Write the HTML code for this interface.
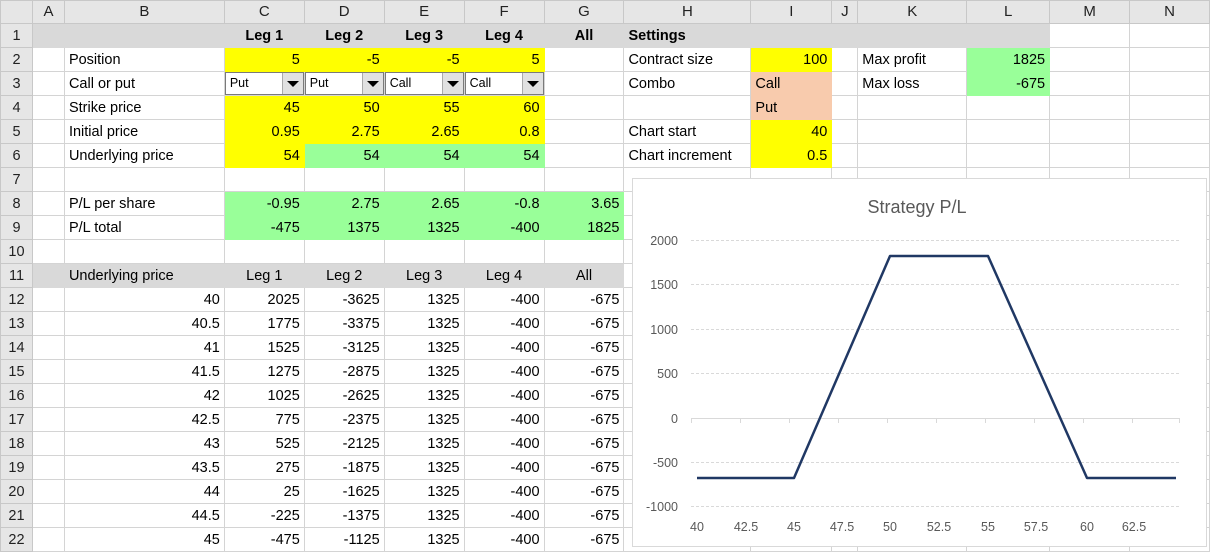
<!DOCTYPE html>
<html><head><meta charset="utf-8">
<style>
body{margin:0;width:1210px;height:551px;overflow:hidden;background:#fff;font-family:"Liberation Sans",sans-serif;font-size:14.5px;color:#000;position:relative}
table{border-collapse:collapse;table-layout:fixed;position:absolute;left:0;top:0}
td{border:1px solid #d4d4d4;height:23px;padding:0 4px;white-space:nowrap;overflow:hidden;line-height:22px}
tr.h td{background:#e6e6e6;text-align:center;font-size:15px;color:#222;border-color:#c8c8c8;height:22px}
td.rh{background:#e6e6e6;text-align:center;color:#222;border-color:#c8c8c8;padding:0}
.r{text-align:right}.c{text-align:center}.b{font-weight:bold}
.g{background:#d9d9d9;border-color:#d9d9d9}
.y{background:#ffff00;border-color:#ffff00}
.gr{background:#99ff99;border-color:#99ff99}
.o{background:#f8cbad;border-color:#f8cbad}
td.dd{padding:0;position:relative}
.box{position:absolute;left:0;top:0;right:0;bottom:0;border:1px solid #7a7a7a;background:#fff;font-size:12.5px;padding-left:4px;line-height:21px}
.btn{position:absolute;right:0;top:0;width:20px;height:21px;background:#e1e1e1;border-left:1px solid #aaa}
.btn:after{content:"";position:absolute;left:4px;top:8px;border-left:6px solid transparent;border-right:6px solid transparent;border-top:6px solid #000}
</style></head><body>
<table>
<colgroup><col style="width:32px"><col style="width:32px"><col style="width:160px"><col style="width:80px"><col style="width:80px"><col style="width:80px"><col style="width:80px"><col style="width:80px"><col style="width:127px"><col style="width:81px"><col style="width:26px"><col style="width:109px"><col style="width:83px"><col style="width:80px"><col style="width:80px"></colgroup>
<tr class="h"><td></td><td>A</td><td>B</td><td>C</td><td>D</td><td>E</td><td>F</td><td>G</td><td>H</td><td>I</td><td>J</td><td>K</td><td>L</td><td>M</td><td>N</td></tr>
<tr><td class="rh">1</td><td class="g"></td><td class="g"></td><td class="g c b">Leg 1</td><td class="g c b">Leg 2</td><td class="g c b">Leg 3</td><td class="g c b">Leg 4</td><td class="g c b">All</td><td class="g b">Settings</td><td class="g"></td><td class="g"></td><td class="g"></td><td class="g"></td><td></td><td></td></tr>
<tr><td class="rh">2</td><td></td><td>Position</td><td class="y r">5</td><td class="y r">-5</td><td class="y r">-5</td><td class="y r">5</td><td></td><td>Contract size</td><td class="y r">100</td><td></td><td>Max profit</td><td class="gr r">1825</td><td></td><td></td></tr>
<tr><td class="rh">3</td><td></td><td>Call or put</td><td class="dd"><div class="box">Put<div class="btn"></div></div></td><td class="dd"><div class="box">Put<div class="btn"></div></div></td><td class="dd"><div class="box">Call<div class="btn"></div></div></td><td class="dd"><div class="box">Call<div class="btn"></div></div></td><td></td><td>Combo</td><td class="o">Call</td><td></td><td>Max loss</td><td class="gr r">-675</td><td></td><td></td></tr>
<tr><td class="rh">4</td><td></td><td>Strike price</td><td class="y r">45</td><td class="y r">50</td><td class="y r">55</td><td class="y r">60</td><td></td><td></td><td class="o">Put</td><td></td><td></td><td></td><td></td><td></td></tr>
<tr><td class="rh">5</td><td></td><td>Initial price</td><td class="y r">0.95</td><td class="y r">2.75</td><td class="y r">2.65</td><td class="y r">0.8</td><td></td><td>Chart start</td><td class="y r">40</td><td></td><td></td><td></td><td></td><td></td></tr>
<tr><td class="rh">6</td><td></td><td>Underlying price</td><td class="y r">54</td><td class="gr r">54</td><td class="gr r">54</td><td class="gr r">54</td><td></td><td>Chart increment</td><td class="y r">0.5</td><td></td><td></td><td></td><td></td><td></td></tr>
<tr><td class="rh">7</td><td></td><td></td><td></td><td></td><td></td><td></td><td></td><td></td><td></td><td></td><td></td><td></td><td></td><td></td></tr>
<tr><td class="rh">8</td><td></td><td>P/L per share</td><td class="gr r">-0.95</td><td class="gr r">2.75</td><td class="gr r">2.65</td><td class="gr r">-0.8</td><td class="gr r">3.65</td><td></td><td></td><td></td><td></td><td></td><td></td><td></td></tr>
<tr><td class="rh">9</td><td></td><td>P/L total</td><td class="gr r">-475</td><td class="gr r">1375</td><td class="gr r">1325</td><td class="gr r">-400</td><td class="gr r">1825</td><td></td><td></td><td></td><td></td><td></td><td></td><td></td></tr>
<tr><td class="rh">10</td><td></td><td></td><td></td><td></td><td></td><td></td><td></td><td></td><td></td><td></td><td></td><td></td><td></td><td></td></tr>
<tr><td class="rh">11</td><td class="g"></td><td class="g">Underlying price</td><td class="g c">Leg 1</td><td class="g c">Leg 2</td><td class="g c">Leg 3</td><td class="g c">Leg 4</td><td class="g c">All</td><td></td><td></td><td></td><td></td><td></td><td></td><td></td></tr>
<tr><td class="rh">12</td><td></td><td class="r">40</td><td class="r">2025</td><td class="r">-3625</td><td class="r">1325</td><td class="r">-400</td><td class="r">-675</td><td></td><td></td><td></td><td></td><td></td><td></td><td></td></tr>
<tr><td class="rh">13</td><td></td><td class="r">40.5</td><td class="r">1775</td><td class="r">-3375</td><td class="r">1325</td><td class="r">-400</td><td class="r">-675</td><td></td><td></td><td></td><td></td><td></td><td></td><td></td></tr>
<tr><td class="rh">14</td><td></td><td class="r">41</td><td class="r">1525</td><td class="r">-3125</td><td class="r">1325</td><td class="r">-400</td><td class="r">-675</td><td></td><td></td><td></td><td></td><td></td><td></td><td></td></tr>
<tr><td class="rh">15</td><td></td><td class="r">41.5</td><td class="r">1275</td><td class="r">-2875</td><td class="r">1325</td><td class="r">-400</td><td class="r">-675</td><td></td><td></td><td></td><td></td><td></td><td></td><td></td></tr>
<tr><td class="rh">16</td><td></td><td class="r">42</td><td class="r">1025</td><td class="r">-2625</td><td class="r">1325</td><td class="r">-400</td><td class="r">-675</td><td></td><td></td><td></td><td></td><td></td><td></td><td></td></tr>
<tr><td class="rh">17</td><td></td><td class="r">42.5</td><td class="r">775</td><td class="r">-2375</td><td class="r">1325</td><td class="r">-400</td><td class="r">-675</td><td></td><td></td><td></td><td></td><td></td><td></td><td></td></tr>
<tr><td class="rh">18</td><td></td><td class="r">43</td><td class="r">525</td><td class="r">-2125</td><td class="r">1325</td><td class="r">-400</td><td class="r">-675</td><td></td><td></td><td></td><td></td><td></td><td></td><td></td></tr>
<tr><td class="rh">19</td><td></td><td class="r">43.5</td><td class="r">275</td><td class="r">-1875</td><td class="r">1325</td><td class="r">-400</td><td class="r">-675</td><td></td><td></td><td></td><td></td><td></td><td></td><td></td></tr>
<tr><td class="rh">20</td><td></td><td class="r">44</td><td class="r">25</td><td class="r">-1625</td><td class="r">1325</td><td class="r">-400</td><td class="r">-675</td><td></td><td></td><td></td><td></td><td></td><td></td><td></td></tr>
<tr><td class="rh">21</td><td></td><td class="r">44.5</td><td class="r">-225</td><td class="r">-1375</td><td class="r">1325</td><td class="r">-400</td><td class="r">-675</td><td></td><td></td><td></td><td></td><td></td><td></td><td></td></tr>
<tr><td class="rh">22</td><td></td><td class="r">45</td><td class="r">-475</td><td class="r">-1125</td><td class="r">1325</td><td class="r">-400</td><td class="r">-675</td><td></td><td></td><td></td><td></td><td></td><td></td><td></td></tr>
</table>
<svg style="position:absolute;left:632px;top:178px" width="575" height="369" viewBox="0 0 575 369">
<rect x="0.5" y="0.5" width="574" height="368" fill="#fff" stroke="#d9d9d9"/>
<text x="285" y="35" text-anchor="middle" font-family="Liberation Sans,sans-serif" font-size="18" fill="#595959">Strategy P/L</text>
<g stroke="#d9d9d9" stroke-width="1" stroke-dasharray="3,2">
<line x1="59" y1="62.5" x2="548" y2="62.5"/><line x1="59" y1="106.5" x2="548" y2="106.5"/><line x1="59" y1="151.5" x2="548" y2="151.5"/><line x1="59" y1="195.5" x2="548" y2="195.5"/><line x1="59" y1="284.5" x2="548" y2="284.5"/><line x1="59" y1="328.5" x2="548" y2="328.5"/></g>
<g stroke="#d9d9d9"><line x1="59" y1="240.5" x2="548" y2="240.5"/>
<line x1="59.5" y1="240" x2="59.5" y2="245"/><line x1="108.5" y1="240" x2="108.5" y2="245"/><line x1="157.5" y1="240" x2="157.5" y2="245"/><line x1="206.5" y1="240" x2="206.5" y2="245"/><line x1="255.5" y1="240" x2="255.5" y2="245"/><line x1="304.5" y1="240" x2="304.5" y2="245"/><line x1="353.5" y1="240" x2="353.5" y2="245"/><line x1="402.5" y1="240" x2="402.5" y2="245"/><line x1="451.5" y1="240" x2="451.5" y2="245"/><line x1="500.5" y1="240" x2="500.5" y2="245"/><line x1="547.5" y1="240" x2="547.5" y2="245"/></g>
<g font-family="Liberation Sans,sans-serif" font-size="12.5" fill="#595959" text-anchor="end">
<text x="46" y="67">2000</text><text x="46" y="111">1500</text><text x="46" y="156">1000</text><text x="46" y="200">500</text><text x="46" y="245">0</text><text x="46" y="289">-500</text><text x="46" y="333">-1000</text></g>
<g font-family="Liberation Sans,sans-serif" font-size="12.5" fill="#595959" text-anchor="middle">
<text x="65" y="353">40</text><text x="114" y="353">42.5</text><text x="162" y="353">45</text><text x="210" y="353">47.5</text><text x="258" y="353">50</text><text x="307" y="353">52.5</text><text x="356" y="353">55</text><text x="404" y="353">57.5</text><text x="455" y="353">60</text><text x="502" y="353">62.5</text></g>
<polyline points="65,300 162,300 258,78 356,78 455,300 544,300" fill="none" stroke="#203864" stroke-width="2.5" stroke-linejoin="round"/>
</svg>
</body></html>
